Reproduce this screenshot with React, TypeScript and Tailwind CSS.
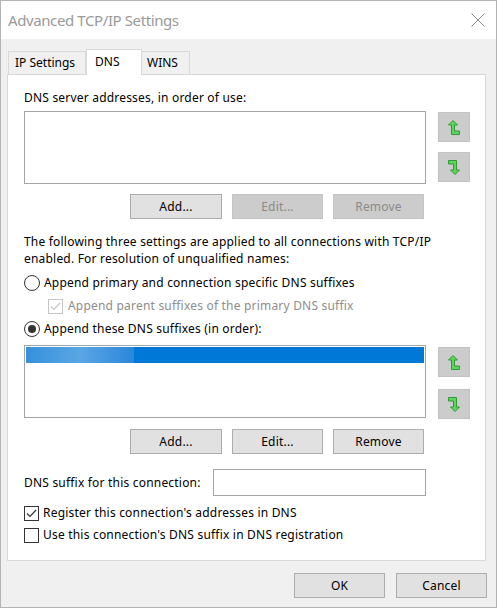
import React from 'react';

const ArrowIcon: React.FC<{ down?: boolean }> = ({ down }) => (
  <svg width="12" height="15" viewBox="0 0 12 15" className={down ? 'rotate-180' : ''}>
    <path
      d="M5 0.5 L9.5 5 L6.5 5 L6.5 11 L11.5 11 L11.5 14.5 L3.5 14.5 L3.5 5 L0.5 5 Z"
      fill="#5fd35f"
      stroke="#2f9c2f"
      strokeWidth="1"
      strokeLinejoin="miter"
    />
  </svg>
);

const ArrowBtn: React.FC<{ down?: boolean }> = ({ down }) => (
  <div className="w-[32px] h-[30px] bg-[#cccccc] border border-[#c2c2c2] flex items-center justify-center">
    <ArrowIcon down={down} />
  </div>
);

const Btn: React.FC<{ label: string; disabled?: boolean; wide?: boolean }> = ({ label, disabled, wide }) => (
  <button
    className={
      disabled
        ? 'w-[91px] h-[25px] bg-[#cccccc] border border-[#c4c4c4] text-[#8a8a8a] text-[12px] leading-none'
        : wide
          ? 'w-[92px] h-[25px] bg-[#e1e1e1] border border-[#adadad] text-black text-[12px] leading-none'
          : 'w-[91px] h-[25px] bg-[#e1e1e1] border border-[#adadad] text-black text-[12px] leading-none'
    }
  >
    {label}
  </button>
);

const Radio: React.FC<{ checked?: boolean; label: string }> = ({ checked, label }) => (
  <div className="flex items-center h-[16px] gap-[4px]">
    <span className="w-[16px] h-[16px] rounded-full border border-[#333333] bg-white flex items-center justify-center">
      {checked && <span className="w-[8px] h-[8px] rounded-full bg-[#333333]" />}
    </span>
    <span>{label}</span>
  </div>
);

const Check: React.FC<{ checked?: boolean; disabled?: boolean; label: string }> = ({ checked, disabled, label }) => (
  <div className={disabled ? 'flex items-center h-[16px] gap-[5px] text-[#8d8d8d]' : 'flex items-center h-[16px] gap-[4px]'}>
    <span
      className={
        disabled
          ? 'w-[15px] h-[15px] border border-[#c5c5c5] bg-white flex items-center justify-center'
          : 'w-[15px] h-[15px] border border-[#333333] bg-white flex items-center justify-center'
      }
    >
      {checked && (
        <svg width="11" height="9" viewBox="0 0 11 9">
          <path d="M1 4.5 L4 7.5 L10 1" fill="none" stroke={disabled ? '#c5c5c5' : '#333333'} strokeWidth="1.2" />
        </svg>
      )}
    </span>
    <span>{label}</span>
  </div>
);

const App: React.FC = () => {
  return (
    <div className="w-[497px] h-[608px] border border-[#b4b4b4] bg-[#f0f0f0] flex flex-col font-['Noto_Sans','DejaVu_Sans',sans-serif] text-[12px] tracking-[0.2px] text-black">
      {/* Title bar */}
      <div className="h-[38px] bg-white flex items-center justify-between pl-[7px] pr-[11px]">
        <span className="text-[15px] text-[#9a9a9a] tracking-[-0.4px]">Advanced TCP/IP Settings</span>
        <svg width="14" height="14" viewBox="0 0 14 14">
          <path d="M0.5 0.5 L13.5 13.5 M13.5 0.5 L0.5 13.5" stroke="#8a8a8a" strokeWidth="1" />
        </svg>
      </div>

      <div className="flex-1 flex flex-col pl-[6px] pt-[10px]">
        {/* Tabs */}
        <div className="flex items-end h-[25px] pl-px relative z-10 tracking-normal">
          <div className="h-[23px] px-[6px] border border-b-0 border-[#d9d9d9] bg-[#f0f0f0] flex items-center w-[78px]">IP Settings</div>
          <div className="h-[26px] -mb-px border border-b-0 border-[#d9d9d9] bg-white w-[56px] pl-[8px] pt-[3px]">DNS</div>
          <div className="h-[23px] border border-b-0 border-l-0 border-[#d9d9d9] bg-[#f0f0f0] flex items-center w-[48px] pl-[5px]">WINS</div>
        </div>

        {/* Panel */}
        <div className="w-[479px] h-[487px] bg-white border border-[#d9d9d9] pl-[16px] pt-[15px] flex flex-col">
          <div className="h-[16px] leading-[16px]">DNS server addresses, in order of use:</div>

          <div className="flex mt-[5px] gap-[12px]">
            <div className="w-[402px] h-[73px] border border-[#a5a5a5] bg-white" />
            <div className="flex flex-col gap-[10px] mt-px">
              <ArrowBtn />
              <ArrowBtn down />
            </div>
          </div>

          <div className="flex gap-[10px] pl-[106px] mt-[10px]">
            <Btn label="Add..." wide />
            <Btn label="Edit..." disabled />
            <Btn label="Remove" disabled />
          </div>

          <p className="mt-[14px] leading-[17px]">
            The following three settings are applied to all connections with TCP/IP
            <br />
            enabled. For resolution of unqualified names:
          </p>

          <div className="mt-[8px]">
            <Radio label="Append primary and connection specific DNS suffixes" />
          </div>
          <div className="mt-[7px] pl-[24px]">
            <Check checked disabled label="Append parent suffixes of the primary DNS suffix" />
          </div>
          <div className="mt-[7px]">
            <Radio checked label="Append these DNS suffixes (in order):" />
          </div>

          <div className="flex mt-[8px] gap-[12px]">
            <div className="w-[402px] h-[73px] border border-[#a5a5a5] bg-white p-px">
              <div className="h-[16px] bg-[#0078d7] flex">
                <div className="w-[108px] h-full bg-gradient-to-r from-[#3590dd] via-[#5aa6e4] to-[#2a86da]" />
              </div>
            </div>
            <div className="flex flex-col gap-[12px] mt-[2px]">
              <ArrowBtn />
              <ArrowBtn down />
            </div>
          </div>

          <div className="flex gap-[10px] pl-[106px] mt-[10px]">
            <Btn label="Add..." wide />
            <Btn label="Edit..." />
            <Btn label="Remove" />
          </div>

          <div className="flex items-center mt-[15px]">
            <span className="w-[189px]">DNS suffix for this connection:</span>
            <div className="w-[213px] h-[27px] border border-[#a5a5a5] bg-white" />
          </div>

          <div className="mt-[9px]">
            <Check checked label="Register this connection's addresses in DNS" />
          </div>
          <div className="mt-[6px]">
            <Check label="Use this connection's DNS suffix in DNS registration" />
          </div>
        </div>

        {/* Footer buttons */}
        <div className="flex justify-end gap-[11px] pr-[9px] mt-[12px]">
          <Btn label="OK" />
          <Btn label="Cancel" />
        </div>
      </div>
    </div>
  );
};

export default App;
